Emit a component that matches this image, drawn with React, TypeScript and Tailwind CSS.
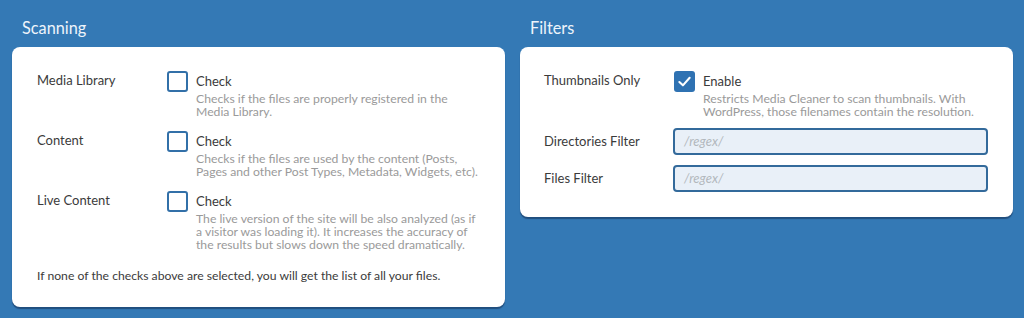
import React from 'react';

const Box = ({ checked = false }: { checked?: boolean }) =>
  checked ? (
    <span className="flex h-[21px] w-[21px] shrink-0 items-center justify-center rounded-[3px] bg-[#2f72b2]">
      <svg width="15" height="15" viewBox="0 0 16 16" fill="none">
        <path d="M2.5 8.5l3.8 3.6L13.5 4" stroke="white" strokeWidth="2.2" strokeLinecap="round" strokeLinejoin="round" />
      </svg>
    </span>
  ) : (
    <span className="block h-[21px] w-[21px] shrink-0 rounded-[3px] border-2 border-[#3270a8] bg-white" />
  );

const CheckRow = ({ label, text, desc, checked }: { label: string; text: string; desc: string; checked?: boolean }) => (
  <div className="flex">
    <div className="w-[130px] shrink-0 text-[13px] leading-[19px] text-[#3b3b3b]">{label}</div>
    <div className="flex-1">
      <div className="flex items-center gap-2">
        <Box checked={checked} />
        <span className="text-[13px] leading-[19px] text-[#3b3b3b]">{text}</span>
      </div>
      <p className="ml-[29px] text-[12.2px] leading-[13px] text-[#9a9a9a]">{desc}</p>
    </div>
  </div>
);

const InputRow = ({ label }: { label: string }) => (
  <div className="flex items-center">
    <div className="w-[129px] shrink-0 text-[13px] text-[#3b3b3b]">{label}</div>
    <div className="flex h-[27px] flex-1 items-center rounded-[4px] border-2 border-[#336a9b] bg-[#e9f0f8] px-[9px] text-[13px] italic text-[#b3b8bd]">
      /regex/
    </div>
  </div>
);

export default function App() {
  return (
    <div
      className="flex h-[318px] w-[1024px] items-start gap-[15px] bg-[#3479b5] pl-[12px] pr-[11px] pt-[17px]"
      style={{ fontFamily: 'Lato, "Open Sans", sans-serif' }}
    >
      {/* Scanning */}
      <div className="w-[493px]">
        <h2 className="mb-[8px] pl-[10px] text-[16.3px] leading-[22px] text-[#eef4fb]">Scanning</h2>
        <div className="rounded-[8px] bg-white px-[25px] pb-[24px] pt-[24px] shadow-[0_2px_1px_rgba(20,50,90,0.6)]">
          <div className="flex flex-col gap-[13px]">
            <CheckRow
              label="Media Library"
              text="Check"
              desc="Checks if the files are properly registered in the Media Library."
            />
            <CheckRow
              label="Content"
              text="Check"
              desc="Checks if the files are used by the content (Posts, Pages and other Post Types, Metadata, Widgets, etc)."
            />
            <CheckRow
              label="Live Content"
              text="Check"
              desc="The live version of the site will be also analyzed (as if a visitor was loading it). It increases the accuracy of the results but slows down the speed dramatically."
            />
          </div>
          <p className="mt-[18px] text-[12.2px] leading-[14px] text-[#3b3b3b]">
            If none of the checks above are selected, you will get the list of all your files.
          </p>
        </div>
      </div>

      {/* Filters */}
      <div className="w-[493px]">
        <h2 className="mb-[8px] pl-[10px] text-[16.3px] leading-[22px] text-[#eef4fb]">Filters</h2>
        <div className="rounded-[8px] bg-white pb-[25px] pl-[24px] pr-[25px] pt-[24px] shadow-[0_2px_1px_rgba(20,50,90,0.6)]">
          <CheckRow
            checked
            label="Thumbnails Only"
            text="Enable"
            desc="Restricts Media Cleaner to scan thumbnails. With WordPress, those filenames contain the resolution."
          />
          <div className="mt-[10px] flex flex-col gap-[10px]">
            <InputRow label="Directories Filter" />
            <InputRow label="Files Filter" />
          </div>
        </div>
      </div>
    </div>
  );
}
